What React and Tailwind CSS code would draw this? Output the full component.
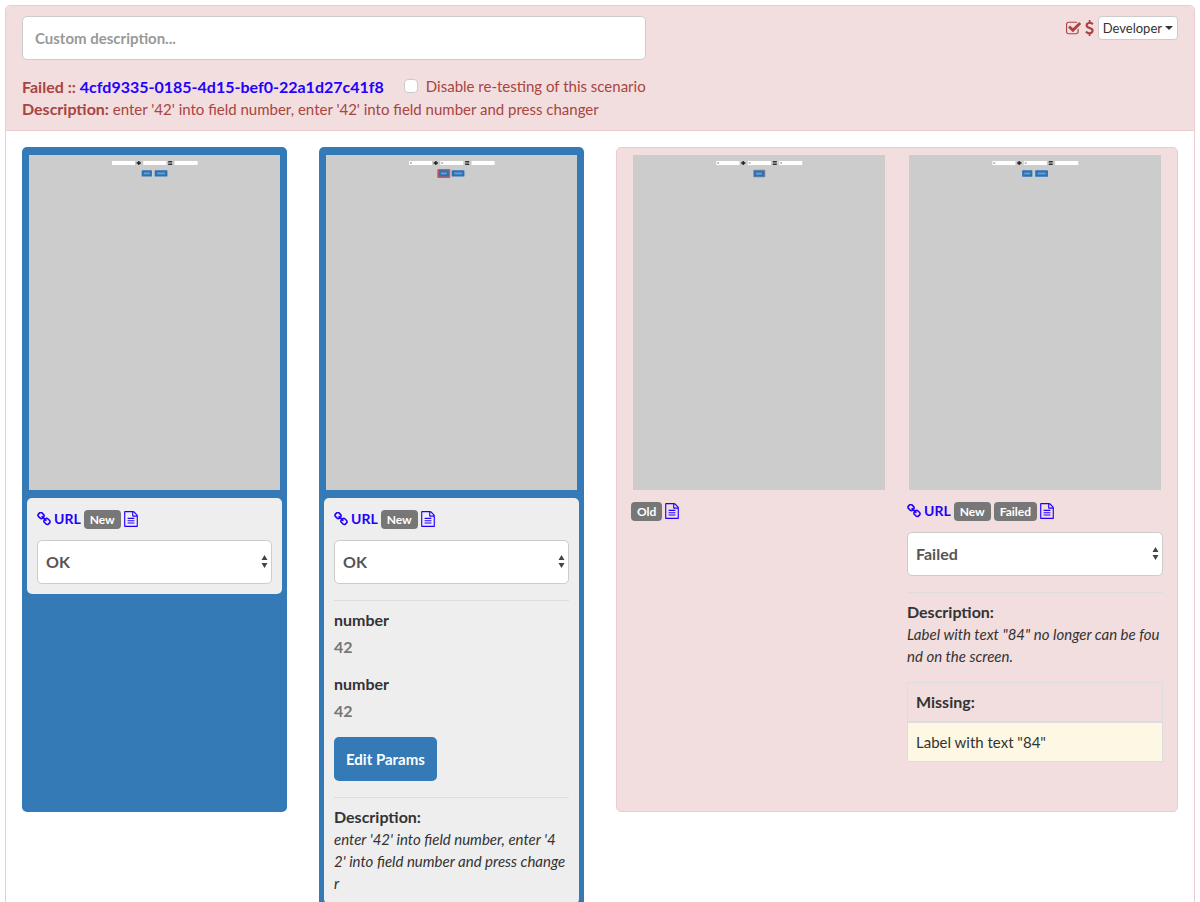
import React, { useState } from 'react';

const ICONS = {
  link: {
    box: '64 64 1664 1664',
    d: 'M1520 1216q0-40-28-68l-208-208q-28-28-68-28-42 0-72 32 3 3 19 18.5t21.5 21.5 15 19 13 25.5 3.5 27.5q0 40-28 68t-68 28q-15 0-27.5-3.5t-25.5-13-19-15-21.5-21.5-18.5-19q-33 31-33 73 0 40 28 68l206 207q27 27 68 27 40 0 68-26l147-146q28-28 28-67zm-703-705q0-40-28-68l-206-207q-28-28-68-28-39 0-68 27l-147 146q-28 28-28 67 0 40 28 68l208 208q27 27 68 27 42 0 72-31-3-3-19-18.5t-21.5-21.5-15-19-13-25.5-3.5-27.5q0-40 28-68t68-28q15 0 27.5 3.5t25.5 13 19 15 21.5 21.5 18.5 19q33-31 33-73zm895 705q0 120-85 203l-147 146q-83 83-203 83-121 0-204-85l-206-207q-83-83-83-203 0-123 88-209l-88-88q-86 88-208 88-120 0-204-84l-208-208q-84-84-84-204t85-203l147-146q83-83 203-83 121 0 204 85l206 207q83 83 83 203 0 123-88 209l88 88q86-88 208-88 120 0 204 84l208 208q84 84 84 204z',
  },
  file: {
    box: '128 0 1536 1792',
    d: 'M1596 380q28 28 48 76t20 88v1152q0 40-28 68t-68 28h-1344q-40 0-68-28t-28-68v-1600q0-40 28-68t68-28h896q40 0 88 20t76 48zm-444-244v376h376q-10-29-22-41l-313-313q-12-12-41-22zm384 1528v-1024h-416q-40 0-68-28t-28-68v-416h-768v1536h1280zm-1024-864q0-14 9-23t23-9h704q14 0 23 9t9 23v64q0 14-9 23t-23 9h-704q-14 0-23-9t-9-23v-64zm736 224q14 0 23 9t9 23v64q0 14-9 23t-23 9h-704q-14 0-23-9t-9-23v-64q0-14 9-23t23-9h704zm0 256q14 0 23 9t9 23v64q0 14-9 23t-23 9h-704q-14 0-23-9t-9-23v-64q0-14 9-23t23-9h704z',
  },
  check: {
    box: '64 64 1664 1536',
    d: 'M1472 930v318q0 119-84.5 203.5t-203.5 84.5h-832q-119 0-203.5-84.5t-84.5-203.5v-832q0-119 84.5-203.5t203.5-84.5h832q63 0 117 25 15 7 18 23 3 17-9 29l-49 49q-10 10-23 10-3 0-9-2-23-6-45-6h-832q-66 0-113 47t-47 113v832q0 66 47 113t113 47h832q66 0 113-47t47-113v-254q0-13 9-22l64-64q10-10 23-10 6 0 12 3 20 8 20 29zm231-489l-814 814q-24 24-57 24t-57-24l-430-430q-24-24-24-57t24-57l110-110q24-24 57-24t57 24l263 263 647-647q24-24 57-24t57 24l110 110q24 24 24 57t-24 57z',
  },
  dollar: {
    box: '416 0 960 1792',
    d: 'M1362 1185q0 153-99.5 263.5t-258.5 136.5v175q0 14-9 23t-23 9h-135q-13 0-22.5-9.5t-9.5-22.5v-175q-66-9-127.5-31t-101.5-44.5-74-48-46.5-37.5-17.5-18q-17-21-2-41l103-135q7-10 23-12 15-2 24 9l2 2q113 99 243 125 37 8 74 8 81 0 142.5-43t61.5-122q0-28-15-53t-33.5-42-58.5-37.5-66-32-80-32.5q-39-16-61.5-25t-61.5-26.5-62.5-31-56.5-35.5-53.5-42.5-43.5-49-35.5-58-21-66.5-8.5-78q0-138 98-242t255-134v-180q0-13 9.5-22.5t22.5-9.5h135q14 0 23 9t9 23v176q57 6 110.5 23t87 33.5 63.5 37.5 39 29 15 14q17 18 5 38l-81 146q-8 15-23 16-14 3-27-7-3-3-14.5-12t-39-26.5-58.5-32-74.5-26-85.5-11.5q-95 0-155 43t-60 111q0 26 8.5 48t29.5 41.5 39.5 33 56 31 60.5 27 70 27.5q53 20 81 31.5t76 35 75.5 42.5 62 50 53 63.5 31.5 76.5 13 94z',
  },
};

const Icon = ({ name, className }) => (
  <svg viewBox={ICONS[name].box} className={className} fill="currentColor" aria-hidden="true">
    <path d={ICONS[name].d} />
  </svg>
);

// Miniature of the tested page: three fields and its buttons
const Thumbnail = ({ filled, single, highlight }) => (
  <svg
    viewBox="0 0 251 335"
    preserveAspectRatio="xMidYMin slice"
    className="block h-[335px] w-full bg-[#ccc]"
    role="img"
    aria-label="Page screenshot"
  >
    {[83, 114.3, 145.6].map((x, i) => (
      <g key={x}>
        <rect x={x} y="6" width="23" height="4" fill="#fff" />
        {filled && (i < 2 || single) && <rect x={x + 1} y="7.2" width="1.8" height="1.6" fill="#aaa" />}
      </g>
    ))}
    <path d="M109.8 6l.8 1.2 1.4.8-1.4.8-.8 1.2-.8-1.2-1.4-.8 1.4-.8z" fill="#222" stroke="#222" strokeWidth=".6" />
    <path d="M139.2 6.5h4M139.2 8h4M139.2 9.5h4" stroke="#333" strokeWidth="1" />
    {highlight && <rect x="111.3" y="14" width="13" height="9" rx="1" fill="#e0504c" />}
    {single ? (
      <g>
        <rect x="120" y="15" width="11.5" height="7" rx=".5" fill="#2a72b5" stroke="#b09a90" strokeWidth=".8" />
        <rect x="122.5" y="17.6" width="6" height="2" fill="#6b9fce" />
      </g>
    ) : (
      <g>
        <rect x="112.7" y="15.2" width="10.2" height="6.4" rx=".5" fill="#2a72b5" />
        <rect x="114.8" y="17.5" width="6" height="1.8" fill="#6b9fce" />
        <rect x="125.7" y="15.2" width="12.7" height="6.4" rx=".5" fill="#2a72b5" />
        <rect x="128.2" y="17.5" width="7.8" height="1.8" fill="#6b9fce" />
      </g>
    )}
  </svg>
);

const Badge = ({ children }) => (
  <span className="rounded bg-[#777] px-[6px] text-[12px] leading-[19px] font-bold text-white">
    {children}
  </span>
);

const StepLinks = ({ url, labels }) => (
  <div className="flex h-[22px] items-center gap-[3px]">
    {url && (
      <a href="#url" className="flex items-center gap-[3px] text-[14px] font-bold text-[#20f]">
        <Icon name="link" className="h-[14px] w-[14px]" />
        URL
      </a>
    )}
    {labels.map((label) => (
      <Badge key={label}>{label}</Badge>
    ))}
    <a href="#source" aria-label="Page source" className="text-[#20f]">
      <Icon name="file" className="h-4 w-[14px]" />
    </a>
  </div>
);

const StatusSelect = ({ initial }) => {
  const [status, setStatus] = useState(initial);

  return (
    <div className="relative mt-[10px]">
      <select
        aria-label="Status"
        value={status}
        onChange={(e) => setStatus(e.target.value)}
        className="block h-[44px] w-full appearance-none rounded-[5px] border border-[#ccc] bg-white px-2 text-[16px] font-bold text-[#555]"
      >
        <option>OK</option>
        <option>Failed</option>
      </select>
      <svg viewBox="0 0 6 13" className="pointer-events-none absolute top-[15px] right-1 h-[13px] w-[7px]" fill="#444">
        <path d="M3 0l3 5H0zM3 13L0 8h6z" />
      </svg>
    </div>
  );
};

const Divider = () => <hr className="mt-4 mb-2 border-[#ddd]" />;

const Description = ({ children }) => (
  <div>
    <strong className="block text-[16px] leading-[22px]">Description:</strong>
    <p className="break-all italic">{children}</p>
  </div>
);

const StepCard = ({ thumbnail, children }) => (
  <section className="min-h-[665px] rounded-[5px] bg-[#337ab7] px-[5px] pt-2 pb-[5px]">
    <div className="mx-[2px] mb-2">{thumbnail}</div>
    <div className="rounded-[5px] bg-[#eee] p-[10px]">{children}</div>
  </section>
);

const App = () => {
  const [customDescription, setCustomDescription] = useState('');
  const [disabled, setDisabled] = useState(false);
  const params = [
    { name: 'number', value: '42' },
    { name: 'number', value: '42' },
  ];

  return (
    <div className="bg-white p-[5px] font-['Lato',sans-serif] text-[15px] leading-[22px] text-[#333]">
      <main className="rounded-[5px] border border-[#ebccd1]">
        <header className="flex items-start justify-between rounded-t border-b border-[#ebccd1] bg-[#f2dede] px-4 py-[10px] text-[#a94442]">
          <div>
            <input
              type="text"
              aria-label="Custom description"
              placeholder="Custom description..."
              value={customDescription}
              onChange={(e) => setCustomDescription(e.target.value)}
              className="mb-[15px] block h-[44px] w-full rounded-[5px] border border-[#ccc] bg-white px-3 font-bold text-[#555] placeholder:text-[#999]"
            />
            <div className="flex items-baseline">
              <strong className="text-[16px] leading-[22px]">
                Failed :: <a href="#scenario" className="text-[#20f]">4cfd9335-0185-4d15-bef0-22a1d27c41f8</a>
              </strong>
              <label className="ml-5 flex items-center gap-2">
                <input
                  type="checkbox"
                  checked={disabled}
                  onChange={(e) => setDisabled(e.target.checked)}
                  className="h-[14px] w-[14px] appearance-none rounded border border-[#ccc] bg-white checked:bg-[#337ab7]"
                />
                Disable re-testing of this scenario
              </label>
            </div>
            <p>
              <strong className="text-[16px] leading-[22px]">Description:</strong> enter '42' into field number, enter '42' into field number and press changer
            </p>
          </div>
          <div className="flex items-center gap-1">
            <Icon name="check" className="h-[14px] w-[15px]" />
            <Icon name="dollar" className="h-[16px] w-[9px]" />
            <button
              type="button"
              className="flex h-[24px] items-center gap-[3px] rounded border border-[#ccc] bg-white px-1 text-[13px] text-[#333]"
            >
              Developer
              <svg viewBox="0 0 8 4" className="h-1 w-2" fill="currentColor">
                <path d="M0 0h8L4 4z" />
              </svg>
            </button>
          </div>
        </header>

        <div className="grid grid-cols-4 items-start gap-8 p-4">
          <StepCard thumbnail={<Thumbnail />}>
            <StepLinks url labels={['New']} />
            <StatusSelect initial="OK" />
          </StepCard>

          <StepCard thumbnail={<Thumbnail filled highlight />}>
            <StepLinks url labels={['New']} />
            <StatusSelect initial="OK" />
            <Divider />
            <dl className="text-[16px] leading-[22px] font-bold">
              {params.map((param, i) => (
                <div key={i} className="mb-[15px]">
                  <dt className="mb-[5px]">{param.name}</dt>
                  <dd className="text-[#777]">{param.value}</dd>
                </div>
              ))}
            </dl>
            <button type="button" className="h-[44px] rounded-[5px] bg-[#337ab7] px-3 font-bold text-white">
              Edit Params
            </button>
            <Divider />
            <Description>
              enter '42' into field number, enter '4<br />
              2' into field number and press change<br />r
            </Description>
          </StepCard>

          {/* Old and new screens compared side by side */}
          <section className="col-span-2 grid min-h-[665px] grid-cols-2 gap-5 rounded-[5px] border border-[#ebccd1] bg-[#f2dede] px-[14px] pt-[7px] pb-4">
            <div>
              <div className="mx-[2px] mb-[10px]">
                <Thumbnail filled single />
              </div>
              <StepLinks labels={['Old']} />
            </div>
            <div>
              <div className="mx-[2px] mb-[10px]">
                <Thumbnail filled />
              </div>
              <StepLinks url labels={['New', 'Failed']} />
              <StatusSelect initial="Failed" />
              <Divider />
              <Description>
                Label with text "84" no longer can be fou<br />nd on the screen.
              </Description>
              <table className="mt-[15px] w-full border-collapse border border-[#ddd] text-left">
                <thead>
                  <tr>
                    <th className="border-b-2 border-[#ddd] p-2 text-[16px] leading-[22px]">Missing:</th>
                  </tr>
                </thead>
                <tbody>
                  <tr>
                    <td className="bg-[#fcf8e3] p-2">Label with text "84"</td>
                  </tr>
                </tbody>
              </table>
            </div>
          </section>
        </div>
      </main>
    </div>
  );
};

export default App;
